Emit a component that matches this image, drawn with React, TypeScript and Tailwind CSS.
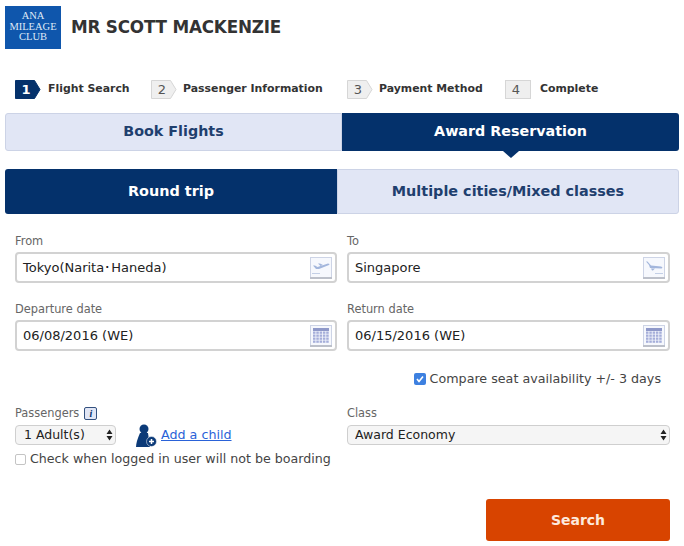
import React from "react";

const font = "font-['Lucida_Grande','DejaVu_Sans',sans-serif]";

function Step({ n, label, active, last, gap }: { n: string; label: string; active?: boolean; last?: boolean; gap: string }) {
  const bg = active ? "#04316b" : "#efefef";
  const stroke = active ? "#04316b" : "#d6d6d6";
  return (
    <div className={`flex items-center ${gap}`}>
      <div className="relative w-[26px] h-[19px] shrink-0">
        <svg width="26" height="19" viewBox="0 0 26 19" className="block">
          {last ? (
            <rect x="0.5" y="0.5" width="25" height="18" fill={bg} stroke={stroke} />
          ) : (
            <path d="M0.5 0.5H19.5L25 9.5L19.5 18.5H0.5Z" fill={bg} stroke={stroke} />
          )}
        </svg>
        <span className={`absolute left-0 top-0 w-[22px] h-[19px] flex items-center justify-center text-[13px] leading-none ${active ? "text-white font-bold" : "text-[#555]"}`}>
          {n}
        </span>
      </div>
      <span className="text-[10.9px] font-bold text-[#333] whitespace-nowrap">{label}</span>
    </div>
  );
}

function IconBox({ children }: { children: React.ReactNode }) {
  return (
    <svg width="22" height="22" viewBox="0 0 22 22" className="block shrink-0">
      <rect x="0.5" y="0.5" width="21" height="20" fill="#f6f8fd" stroke="#cdd4e6" />
      <rect x="0" y="20" width="22" height="2" fill="#bcc0ca" />
      {children}
    </svg>
  );
}

function PlaneIcon({ landing }: { landing?: boolean }) {
  return (
    <IconBox>
      {landing ? (
        <g>
          <path d="M3 4.5H4.5L8 8.5L18 9.5Q20.5 10.5 18.5 11.5L7 11L6 8Z" fill="#a3b6dc" />
          <path d="M8 11.5H12L10 13.5H9Z" fill="#a3b6dc" />
          <rect x="12" y="16" width="8" height="1" fill="#c3cfe6" />
        </g>
      ) : (
        <g>
          <path d="M3 8.5H5L7.5 10L18 6.5Q20.5 6.5 19 8L9 12L6 12Z" fill="#a3b6dc" />
          <path d="M8 6.5H10L13 8L10.5 9Z" fill="#a3b6dc" />
          <rect x="2" y="16" width="8" height="1" fill="#c3cfe6" />
        </g>
      )}
    </IconBox>
  );
}

function CalendarIcon() {
  const cells = [];
  for (let r = 0; r < 4; r++) {
    for (let c = 0; c < 5; c++) {
      cells.push(<rect key={`${r}-${c}`} x={3 + c * 3.3} y={6.5 + r * 3} width="2.5" height="2.3" fill="#a5aeda" />);
    }
  }
  return (
    <IconBox>
      <rect x="3" y="3" width="16" height="3" fill="#8f99c9" />
      {cells}
    </IconBox>
  );
}

function Field({ label, value, icon }: { label: string; value: string; icon: React.ReactNode }) {
  return (
    <div>
      <label className="block text-[11.4px] leading-[15px] text-[#666] mb-[3px]">{label}</label>
      <div className="h-[31px] flex items-center justify-between pl-[6px] pr-[3px] bg-white border-2 border-[#d2d2d2] rounded-[4px]">
        <span className="text-[13px] text-[#222] whitespace-nowrap">{value}</span>
        {icon}
      </div>
    </div>
  );
}

function SelectArrows() {
  return (
    <svg width="7" height="12" viewBox="0 0 7 12" className="absolute right-[3px] top-[4px] pointer-events-none">
      <path d="M3.5 0.5L6.5 5H0.5Z M3.5 11.5L6.5 7H0.5Z" fill="#222" />
    </svg>
  );
}

export default function App() {
  return (
    <div className={`w-[684px] h-[546px] overflow-hidden bg-white ${font}`}>
      <header className="flex items-center pl-[5px] pt-[5px] h-[49px]">
        <div className="w-[56px] h-[43px] bg-[#0f56ac] text-[#dfe9f6] flex flex-col items-center justify-center font-['Liberation_Serif',serif] text-[10.5px] leading-[10.5px]">
          <span>ANA</span>
          <span>MILEAGE</span>
          <span>CLUB</span>
        </div>
        <h1 className="ml-[10px] text-[16.8px] font-bold text-[#333] tracking-[-0.2px] mt-[1px] whitespace-nowrap">MR SCOTT MACKENZIE</h1>
      </header>

      <nav className="flex items-center pl-[15px] mt-[31px] h-[19px]">
        <Step n="1" label="Flight Search" active gap="gap-[7px] w-[136px]" />
        <Step n="2" label="Passenger Information" gap="gap-[6px] w-[196px]" />
        <Step n="3" label="Payment Method" gap="gap-[6px] w-[158px]" />
        <Step n="4" label="Complete" last gap="gap-[9px]" />
      </nav>

      <div className="flex mt-[14px] mx-[5px] h-[38px]">
        <div className="w-[337px] flex items-center justify-center bg-[#e1e6f5] border border-[#ccd3e6] rounded-l-[3px] text-[14.3px] font-bold text-[#1f3f6e]">
          Book Flights
        </div>
        <div className="relative flex-1 flex items-center justify-center bg-[#04316b] rounded-r-[3px] text-[14.3px] font-bold text-white">
          Award Reservation
          <div className="absolute left-1/2 -ml-[8px] top-full w-0 h-0 border-x-[8px] border-x-transparent border-t-[7px] border-t-[#04316b]" />
        </div>
      </div>

      <div className="flex mt-[18px] mx-[5px] h-[45px]">
        <div className="w-[332px] flex items-center justify-center bg-[#04316b] rounded-l-[3px] text-[14.4px] font-bold text-white">
          Round trip
        </div>
        <div className="flex-1 flex items-center justify-center bg-[#e1e6f5] border border-[#ccd3e6] rounded-r-[3px] text-[14.4px] font-bold text-[#1f3f6e]">
          Multiple cities/Mixed classes
        </div>
      </div>

      <div className="grid grid-cols-[322px_323px] gap-x-[10px] gap-y-[19px] ml-[15px] mt-[20px]">
        <Field label="From" value="Tokyo(Narita･Haneda)" icon={<PlaneIcon />} />
        <Field label="To" value="Singapore" icon={<PlaneIcon landing />} />
        <Field label="Departure date" value="06/08/2016 (WE)" icon={<CalendarIcon />} />
        <Field label="Return date" value="06/15/2016 (WE)" icon={<CalendarIcon />} />
      </div>

      <div className="flex items-center justify-end gap-[4px] mt-[20px] pr-[23px] h-[16px]">
        <span className="w-[12px] h-[12px] rounded-[2px] bg-[#3d80e0] flex items-center justify-center">
          <svg width="10" height="10" viewBox="0 0 10 10">
            <path d="M2 5L4 7.5L8 2.5" fill="none" stroke="#fff" strokeWidth="1.6" />
          </svg>
        </span>
        <span className="text-[12.7px] text-[#444] whitespace-nowrap">Compare seat availability +/- 3 days</span>
      </div>

      <div className="grid grid-cols-[322px_323px] gap-x-[10px] ml-[15px] mt-[19px]">
        <div>
          <div className="flex items-center gap-[5px] h-[15px]">
            <span className="text-[11.4px] text-[#666]">Passengers</span>
            <span className="w-[13px] h-[13px] flex items-center justify-center border border-[#33517f] rounded-[2px] bg-[#e1e6f5] text-[10px] font-bold italic text-[#04316b] font-['Liberation_Serif',serif]">i</span>
          </div>
          <div className="flex items-center mt-[4px] h-[20px]">
            <div className="relative w-[101px] h-[20px]">
              <select className="block appearance-none w-full h-full pl-[8px] text-[12.5px] text-[#222] bg-[#f5f5f5] border border-[#cfcfcf] rounded-[4px] outline-none">
                <option>1 Adult(s)</option>
              </select>
              <SelectArrows />
            </div>
            <svg width="22" height="24" viewBox="0 0 22 24" className="ml-[19px] shrink-0 mt-[1px]">
              <circle cx="9" cy="5" r="4.5" fill="#0b3a78" />
              <path d="M5 9Q1 18 1 23H15L13 9Z" fill="#0b3a78" />
              <circle cx="16.5" cy="17.5" r="5" fill="#0b3a78" stroke="#fff" strokeWidth="0.5" />
              <path d="M16.5 15V20M14 17.5H19" stroke="#fff" strokeWidth="1.5" />
            </svg>
            <a href="#" className="ml-[4px] text-[12.7px] text-[#2a62d8] underline whitespace-nowrap">Add a child</a>
          </div>
          <div className="flex items-center gap-[4px] mt-[6px] h-[16px]">
            <span className="w-[11px] h-[11px] rounded-[2px] border border-[#c4c4c4] bg-white" />
            <span className="text-[12.65px] text-[#444] whitespace-nowrap">Check when logged in user will not be boarding</span>
          </div>
        </div>
        <div>
          <div className="text-[11.4px] leading-[15px] text-[#666]">Class</div>
          <div className="relative h-[20px] mt-[4px]">
            <select className="block appearance-none w-full h-full pl-[7px] text-[12.5px] text-[#222] bg-[#f5f5f5] border border-[#cfcfcf] rounded-[4px] outline-none">
              <option>Award Economy</option>
            </select>
            <SelectArrows />
          </div>
        </div>
      </div>

      <div className="flex justify-end pr-[14px] mt-[32px]">
        <button className="w-[184px] h-[42px] bg-[#d84400] rounded-[3px] text-[14px] font-bold text-[#fdeadd]">Search</button>
      </div>
    </div>
  );
}
